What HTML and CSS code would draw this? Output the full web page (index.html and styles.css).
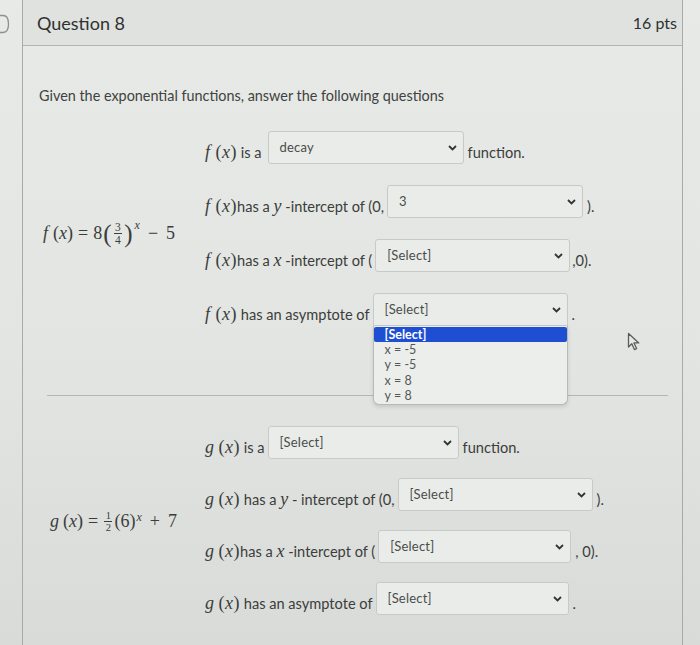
FILE: index.html
```html
<!DOCTYPE html>
<html>
<head>
<meta charset="utf-8">
<link rel="stylesheet" href="styles.css">
</head>
<body>
<div class="page">
  <div class="gutter">
    <svg class="badge" width="10" height="20" viewBox="0 0 10 20"><path d="M0 1.5 H3 Q8.5 1.5 8.5 10 Q8.5 18.5 3 18.5 H0" fill="none" stroke="#8e918d" stroke-width="1.3"/></svg>
  </div>
  <div class="card">
    <div class="head">
      <span class="title">Question 8</span>
      <span class="pts">16 pts</span>
    </div>
    <div class="content">
      <p class="intro">Given the exponential functions, answer the following questions</p>

      <div class="group fgroup">
        <div class="formula f-formula">
          <span class="eq">
            <i class="mi f">f</i><span class="mp">(</span><i class="mi">x</i><span class="mp">)</span>
            <span class="rel">=</span>
            <span class="mn">8</span>
            <span class="bigp">(</span>
            <span class="frac"><span class="num">3</span><span class="den">4</span></span>
            <span class="bigp">)</span>
            <span class="sup fsup"><i class="mi">x</i></span>
            <span class="bin">−</span>
            <span class="mn">5</span>
          </span>
        </div>
        <div class="rows">
          <div class="row">
            <span class="lbl first"><span class="fx"><i class="mi f">f</i><span class="mp">(</span><i class="mi">x</i><span class="mp">)</span></span> is a</span>
            <div class="sel w196"><span class="val">decay</span><svg class="chev" width="9" height="6" viewBox="0 0 9 6"><path d="M1 1 L4.5 4.5 L8 1" fill="none" stroke="#333" stroke-width="1.8"/></svg></div>
            <span class="aft">function.</span>
          </div>
          <div class="row">
            <span class="lbl"><span class="fx"><i class="mi f">f</i><span class="mp">(</span><i class="mi">x</i><span class="mp">)</span></span>has a <i class="mi v">y</i> -intercept of (0,</span>
            <div class="sel w196"><span class="val">3</span><svg class="chev" width="9" height="6" viewBox="0 0 9 6"><path d="M1 1 L4.5 4.5 L8 1" fill="none" stroke="#333" stroke-width="1.8"/></svg></div>
            <span class="aft">).</span>
          </div>
          <div class="row">
            <span class="lbl"><span class="fx"><i class="mi f">f</i><span class="mp">(</span><i class="mi">x</i><span class="mp">)</span></span>has a <i class="mi v">x</i> -intercept of (</span>
            <div class="sel w195"><span class="val">[Select]</span><svg class="chev" width="9" height="6" viewBox="0 0 9 6"><path d="M1 1 L4.5 4.5 L8 1" fill="none" stroke="#333" stroke-width="1.8"/></svg></div>
            <span class="aft tight">,0).</span>
          </div>
          <div class="row">
            <span class="lbl"><span class="fx"><i class="mi f">f</i><span class="mp">(</span><i class="mi">x</i><span class="mp">)</span></span> has an asymptote of</span>
            <div class="selwrap">
              <div class="sel w195 open"><span class="val">[Select]</span><svg class="chev" width="9" height="6" viewBox="0 0 9 6"><path d="M1 1 L4.5 4.5 L8 1" fill="none" stroke="#333" stroke-width="1.8"/></svg></div>
              <ul class="menu">
                <li class="on">[Select]</li>
                <li>x = -5</li>
                <li>y = -5</li>
                <li>x = 8</li>
                <li>y = 8</li>
              </ul>
            </div>
            <span class="aft">.</span>
          </div>
        </div>
      </div>

      <div class="sep"></div>

      <div class="group ggroup">
        <div class="formula g-formula">
          <span class="eq">
            <i class="mi g">g</i><span class="mp">(</span><i class="mi">x</i><span class="mp">)</span>
            <span class="rel">=</span>
            <span class="frac small"><span class="num">1</span><span class="den">2</span></span>
            <span class="mp">(</span><span class="mn">6</span><span class="mp">)</span>
            <span class="sup gsup"><i class="mi">x</i></span>
            <span class="bin">+</span>
            <span class="mn">7</span>
          </span>
        </div>
        <div class="rows grows">
          <div class="row">
            <span class="lbl"><span class="fx"><i class="mi g">g</i><span class="mp">(</span><i class="mi">x</i><span class="mp">)</span></span> is a</span>
            <div class="sel w191"><span class="val">[Select]</span><svg class="chev" width="9" height="6" viewBox="0 0 9 6"><path d="M1 1 L4.5 4.5 L8 1" fill="none" stroke="#333" stroke-width="1.8"/></svg></div>
            <span class="aft">function.</span>
          </div>
          <div class="row">
            <span class="lbl"><span class="fx"><i class="mi g">g</i><span class="mp">(</span><i class="mi">x</i><span class="mp">)</span></span> has a <i class="mi v">y</i> - intercept of (0,</span>
            <div class="sel w195"><span class="val">[Select]</span><svg class="chev" width="9" height="6" viewBox="0 0 9 6"><path d="M1 1 L4.5 4.5 L8 1" fill="none" stroke="#333" stroke-width="1.8"/></svg></div>
            <span class="aft">).</span>
          </div>
          <div class="row">
            <span class="lbl"><span class="fx"><i class="mi g">g</i><span class="mp">(</span><i class="mi">x</i><span class="mp">)</span></span>has a <i class="mi v">x</i> -intercept of (</span>
            <div class="sel w193"><span class="val">[Select]</span><svg class="chev" width="9" height="6" viewBox="0 0 9 6"><path d="M1 1 L4.5 4.5 L8 1" fill="none" stroke="#333" stroke-width="1.8"/></svg></div>
            <span class="aft">, 0).</span>
          </div>
          <div class="row">
            <span class="lbl"><span class="fx"><i class="mi g">g</i><span class="mp">(</span><i class="mi">x</i><span class="mp">)</span></span> has an asymptote of</span>
            <div class="sel w193"><span class="val">[Select]</span><svg class="chev" width="9" height="6" viewBox="0 0 9 6"><path d="M1 1 L4.5 4.5 L8 1" fill="none" stroke="#333" stroke-width="1.8"/></svg></div>
            <span class="aft">.</span>
          </div>
        </div>
      </div>
    </div>
  </div>
</div>
<svg class="cursor" width="14" height="20" viewBox="0 0 14 20"><path d="M1.5 1.5 L1.5 15 L4.8 11.8 L7.4 17.6 L9.6 16.6 L7 10.9 L11.8 10.9 Z" fill="#e6e9e5" stroke="#5a5d5a" stroke-width="1.3" stroke-linejoin="round"/></svg>
</body>
</html>
```

FILE: styles.css
```css
html, body {
  margin: 0;
  padding: 0;
}
body {
  width: 700px;
  height: 645px;
  overflow: hidden;
  position: relative;
  background: linear-gradient(180deg, #e7eae6 0%, #e2e5e1 55%, #d9dbd8 100%);
  font-family: Lato, "Open Sans", "Liberation Sans", sans-serif;
  color: #3b3d3c;
}
.page {
  display: flex;
  height: 645px;
}
.gutter {
  width: 22px;
  flex: none;
  padding-top: 14px;
  box-sizing: border-box;
}
.badge {
  display: block;
}
.card {
  width: 661px;
  flex: none;
  box-sizing: border-box;
  border-left: 1px solid #a7aaa6;
  border-right: 1px solid #a7aaa6;
}
.head {
  height: 46px;
  box-sizing: border-box;
  border-bottom: 1px solid #b1b4b0;
  background: #dfe2de;
  display: flex;
  justify-content: space-between;
  align-items: center;
  padding: 0 5px 0 14px;
  color: #2f3130;
}
.title {
  font-size: 18px;
}
.pts {
  font-size: 16px;
}
.content {
  padding: 40px 0 0 16px;
}
.intro {
  margin: 0;
  font-size: 14.4px;
  line-height: 20px;
  color: #404241;
}
.group {
  display: flex;
  align-items: center;
}
.fgroup {
  margin-top: 25px;
}
.ggroup {
  margin-top: 30px;
}
.formula {
  flex: none;
  box-sizing: border-box;
}
.f-formula {
  width: 166px;
  padding-left: 4px;
  padding-top: 9px;
}
.g-formula {
  width: 166px;
  padding-left: 11px;
  padding-top: 1px;
}
.rows {
  display: flex;
  flex-direction: column;
  align-items: flex-start;
  gap: 21px;
}
.grows {
  gap: 19px;
}
.row {
  display: flex;
  align-items: center;
  height: 33px;
}
.lbl, .aft {
  font-size: 14.6px;
  padding-top: 9px;
  white-space: pre;
  color: #3b3d3c;
}
.lbl {
  margin-right: 3px;
}
.lbl.first {
  margin-right: 6px;
}
.aft {
  margin-left: 4px;
}
.aft.tight {
  margin-left: 2px;
}
.mi {
  font-family: "Liberation Serif", "DejaVu Serif", serif;
  font-style: italic;
  font-size: 18px;
}
.mp, .mn, .rel, .bin {
  font-family: "Liberation Serif", "DejaVu Serif", serif;
  font-style: normal;
  font-size: 18px;
}
.fx .f, .eq .f {
  margin-right: 5px;
}
.fx .g, .eq .g {
  margin-right: 4px;
}
.fx .mp {
  margin: 0 0.5px;
}
.eq {
  display: inline-flex;
  align-items: center;
  color: #3b3d3c;
  white-space: nowrap;
}
.rel {
  margin: 0 5px;
}
.bin {
  margin: 0 8px 0 8px;
}
.bigp {
  font-family: "Liberation Serif", "DejaVu Serif", serif;
  font-size: 25px;
  line-height: 25px;
  margin: 0 1px;
}
.frac {
  display: inline-flex;
  flex-direction: column;
  align-items: center;
  font-family: "Liberation Serif", "DejaVu Serif", serif;
  font-size: 11.5px;
  line-height: 10px;
  padding: 0 1px;
}
.frac .num {
  border-bottom: 1px solid #3b3d3c;
  padding: 0 1.5px 1px;
}
.frac .den {
  padding-top: 1px;
}
.frac.small {
  font-size: 10.5px;
  line-height: 9px;
  margin-right: 1px;
}
.sup {
  align-self: flex-start;
  margin-left: 1px;
  line-height: 12px;
}
.fsup {
  margin-top: -4px;
}
.gsup {
  margin-top: -2px;
}
.sup .mi {
  font-size: 12px;
}
.sel {
  height: 33px;
  box-sizing: border-box;
  border: 1px solid #c7cac6;
  border-radius: 3px;
  background: #e9ece8;
  display: flex;
  align-items: center;
  justify-content: space-between;
  padding: 0 6px 0 11px;
  font-size: 13px;
  color: #4a4c4b;
}
.w196 { width: 196px; }
.w195 { width: 195px; }
.w193 { width: 193px; }
.w191 { width: 191px; }
.val {
  margin-top: -2px;
  letter-spacing: 0.2px;
}
.chev {
  display: block;
}
.selwrap {
  position: relative;
}
.sel.open {
  border-radius: 3px 3px 0 0;
}
.menu {
  position: absolute;
  top: 100%;
  left: 0;
  width: 195px;
  box-sizing: border-box;
  margin: 0;
  padding: 1px 0 1px;
  list-style: none;
  background: #eceeeb;
  border: 1px solid #b7bab6;
  border-top: none;
  border-radius: 0 0 6px 6px;
  box-shadow: 0 2px 4px rgba(0, 0, 0, 0.12);
  z-index: 5;
}
.menu li {
  font-size: 12.5px;
  line-height: 15.2px;
  padding-left: 11px;
  color: #555856;
}
.menu li.on {
  background: #1e4fd2;
  color: #ffffff;
  font-weight: 700;
  border-radius: 2px;
}
.sep {
  margin-top: 69px;
  margin-left: 8px;
  width: 621px;
  height: 1px;
  background: #b4b7b3;
}
.cursor {
  position: absolute;
  left: 627px;
  top: 332px;
}
```
